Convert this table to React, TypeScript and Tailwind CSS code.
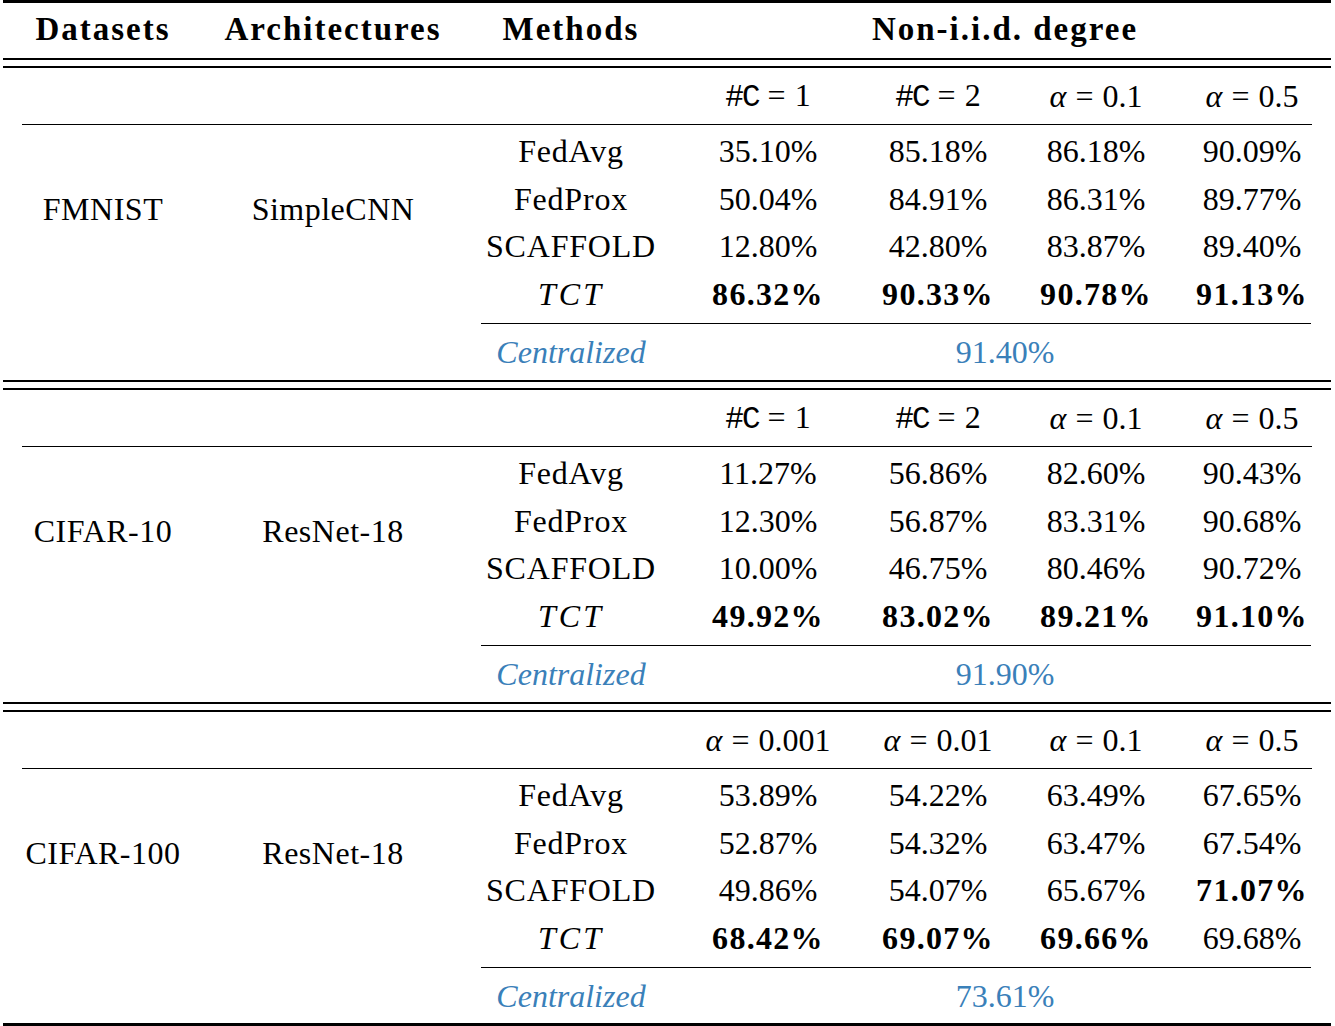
const COLS = "grid grid-cols-[200px_260px_216px_178px_162px_154px_158px]";

type Cell = { v: string; b?: boolean };

interface Section {
	dataset: string;
	arch: string;
	heads: React.ReactNode[];
	rows: { method: string; italic?: boolean; vals: Cell[] }[];
	central: string;
}

const Hash = ({ n }: { n: string }) => (
	<span>
		<span className="font-['Liberation_Mono',monospace] text-[31px] tracking-[-2px]">#C</span>
		<span className="mx-[9px]">=</span>
		{n}
	</span>
);

const Alpha = ({ n }: { n: string }) => (
	<span>
		<span className="italic">α</span>
		<span className="mx-[9px]">=</span>
		{n}
	</span>
);

const c = (v: string, b = false): Cell => ({ v, b });

const sections: Section[] = [
	{
		dataset: "FMNIST",
		arch: "SimpleCNN",
		heads: [<Hash n="1" />, <Hash n="2" />, <Alpha n="0.1" />, <Alpha n="0.5" />],
		rows: [
			{ method: "FedAvg", vals: [c("35.10%"), c("85.18%"), c("86.18%"), c("90.09%")] },
			{ method: "FedProx", vals: [c("50.04%"), c("84.91%"), c("86.31%"), c("89.77%")] },
			{ method: "SCAFFOLD", vals: [c("12.80%"), c("42.80%"), c("83.87%"), c("89.40%")] },
			{
				method: "TCT",
				italic: true,
				vals: [c("86.32%", true), c("90.33%", true), c("90.78%", true), c("91.13%", true)],
			},
		],
		central: "91.40%",
	},
	{
		dataset: "CIFAR-10",
		arch: "ResNet-18",
		heads: [<Hash n="1" />, <Hash n="2" />, <Alpha n="0.1" />, <Alpha n="0.5" />],
		rows: [
			{ method: "FedAvg", vals: [c("11.27%"), c("56.86%"), c("82.60%"), c("90.43%")] },
			{ method: "FedProx", vals: [c("12.30%"), c("56.87%"), c("83.31%"), c("90.68%")] },
			{ method: "SCAFFOLD", vals: [c("10.00%"), c("46.75%"), c("80.46%"), c("90.72%")] },
			{
				method: "TCT",
				italic: true,
				vals: [c("49.92%", true), c("83.02%", true), c("89.21%", true), c("91.10%", true)],
			},
		],
		central: "91.90%",
	},
	{
		dataset: "CIFAR-100",
		arch: "ResNet-18",
		heads: [<Alpha n="0.001" />, <Alpha n="0.01" />, <Alpha n="0.1" />, <Alpha n="0.5" />],
		rows: [
			{ method: "FedAvg", vals: [c("53.89%"), c("54.22%"), c("63.49%"), c("67.65%")] },
			{ method: "FedProx", vals: [c("52.87%"), c("54.32%"), c("63.47%"), c("67.54%")] },
			{ method: "SCAFFOLD", vals: [c("49.86%"), c("54.07%"), c("65.67%"), c("71.07%", true)] },
			{
				method: "TCT",
				italic: true,
				vals: [c("68.42%", true), c("69.07%", true), c("69.66%", true), c("69.68%")],
			},
		],
		central: "73.61%",
	},
];

function DoubleRule() {
	return (
		<div className="flex flex-col">
			<div className="h-[2px] bg-black" />
			<div className="h-[6px]" />
			<div className="h-[2px] bg-black" />
		</div>
	);
}

function SectionBlock({ s, last }: { s: Section; last: boolean }) {
	return (
		<div>
			<DoubleRule />
			{/* sub header */}
			<div className={`${COLS} h-[56px] items-center text-center`}>
				<div />
				<div />
				<div />
				{s.heads.map((h, i) => (
					<div key={i} className="leading-none">
						{h}
					</div>
				))}
			</div>
			<div className="mx-[19px] h-px bg-black" />
			{/* body */}
			<div className={`${COLS} grid-rows-[repeat(4,47.5px)] pt-[3px] pb-[5px] text-center`}>
				<div className="row-span-4 self-start pt-[57px] leading-[48px] tracking-[0.5px]">
					{s.dataset}
				</div>
				<div className="row-span-4 self-start pt-[57px] leading-[48px] tracking-[0.5px]">
					{s.arch}
				</div>
				{s.rows.map((r) => (
					<div key={r.method} className="contents">
						<div
							className={`col-start-3 leading-[47.5px] ${
								r.italic ? "italic tracking-[3px]" : "tracking-[0.8px]"
							}`}
						>
							{r.method}
						</div>
						{r.vals.map((v, i) => (
							<div
								key={i}
								className={`leading-[47.5px] ${v.b ? "font-bold tracking-[1.3px]" : ""}`}
							>
								{v.v}
							</div>
						))}
					</div>
				))}
			</div>
			<div className={COLS}>
				<div className="col-span-2" />
				<div className="col-span-5 ml-[18px] mr-[20px] h-px bg-black" />
			</div>
			<div
				className={`${COLS} ${last ? "h-[55px]" : "h-[56px]"} items-center text-center text-[#3a80b9]`}
			>
				<div />
				<div />
				<div className="italic">Centralized</div>
				<div className="col-span-4">{s.central}</div>
			</div>
		</div>
	);
}

export default function App() {
	return (
		<div className="min-h-[1026px] w-[1335px] bg-white font-['Liberation_Serif',serif] text-[32px] text-black">
			<div className="ml-[3px] w-[1328px]">
				<div className="h-[3px] bg-black" />
				<div className={`${COLS} h-[55px] items-center pb-[2px] text-center text-[33px] font-bold tracking-[2px]`}>
					<div>Datasets</div>
					<div>Architectures</div>
					<div>Methods</div>
					<div className="col-span-4">Non-i.i.d. degree</div>
				</div>
				{sections.map((s, i) => (
					<SectionBlock key={s.dataset} s={s} last={i === sections.length - 1} />
				))}
				<div className="h-[4px] bg-black" />
			</div>
		</div>
	);
}
